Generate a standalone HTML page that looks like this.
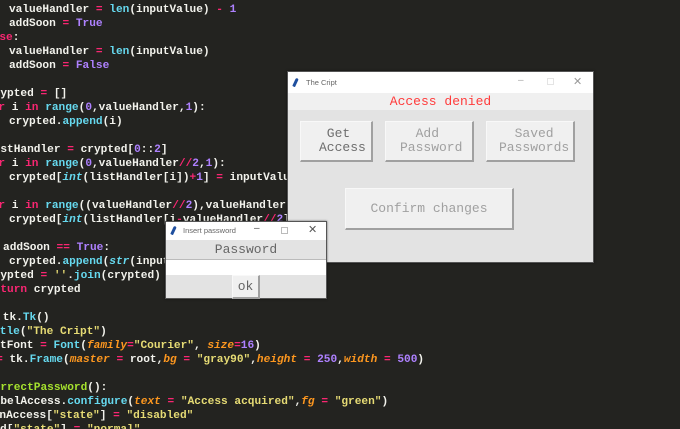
<!DOCTYPE html>
<html><head><meta charset="utf-8"><style>
*{margin:0;padding:0;box-sizing:border-box}
html,body{width:680px;height:429px;overflow:hidden}
body{background:#232320;position:relative;font-family:"Liberation Mono",monospace}
#c{position:absolute;left:0;top:0;width:680px;height:429px;overflow:hidden}
.l{position:absolute;white-space:pre;font-size:11.15px;font-weight:bold;color:#f2f2ec;line-height:14px;height:14px}
.k{color:#f92672}.f{color:#66d9ef}.n{color:#ae81ff}.s{color:#e6db74}.p{color:#fd971f;font-style:italic}.g{color:#a6e22e}.fi{color:#66d9ef;font-style:italic}
.win{position:absolute;background:#e3e3e3;border:1px solid #555;box-shadow:0 0 2px rgba(0,0,0,.6)}
.tb{position:absolute;left:0;right:0;top:0;background:#fff;font-family:"Liberation Sans",sans-serif;font-size:7.5px;color:#666}
.ic{position:absolute;width:3px;height:9px;background:#1f4f9f;border-radius:2px 2px 1px 1px;transform:rotate(25deg)}
.btn{position:absolute;background:#f0f0f0;border-right:2px solid #a0a0a0;border-bottom:2px solid #a0a0a0;border-top:1px solid #f8f8f8;border-left:1px solid #f8f8f8;font-family:"Liberation Mono",monospace;font-size:13px;color:#a0a0a0;line-height:14px;white-space:pre;display:flex;align-items:center}
</style></head><body><div id="c">
<div class="l" style="top:3px;left:9px">valueHandler <span class="k">=</span> <span class="f">len</span>(inputValue) <span class="k">-</span> <span class="n">1</span></div>
<div class="l" style="top:17px;left:9px">addSoon <span class="k">=</span> <span class="n">True</span></div>
<div class="l" style="top:31px;left:-14px"><span class="k">else</span>:</div>
<div class="l" style="top:45px;left:9px">valueHandler <span class="k">=</span> <span class="f">len</span>(inputValue)</div>
<div class="l" style="top:59px;left:9px">addSoon <span class="k">=</span> <span class="n">False</span></div>
<div class="l" style="top:87px;left:-13px">crypted <span class="k">=</span> []</div>
<div class="l" style="top:101px;left:-15px"><span class="k">for</span> i <span class="k">in</span> <span class="f">range</span>(<span class="n">0</span>,valueHandler,<span class="n">1</span>):</div>
<div class="l" style="top:115px;left:9px">crypted.<span class="f">append</span>(i)</div>
<div class="l" style="top:143px;left:-13px">listHandler <span class="k">=</span> crypted[<span class="n">0</span>::<span class="n">2</span>]</div>
<div class="l" style="top:157px;left:-15px"><span class="k">for</span> i <span class="k">in</span> <span class="f">range</span>(<span class="n">0</span>,valueHandler<span class="k">//</span><span class="n">2</span>,<span class="n">1</span>):</div>
<div class="l" style="top:171px;left:9px">crypted[<span class="fi">int</span>(listHandler[i])<span class="k">+</span><span class="n">1</span>] <span class="k">=</span> inputValue[i]</div>
<div class="l" style="top:199px;left:-15px"><span class="k">for</span> i <span class="k">in</span> <span class="f">range</span>((valueHandler<span class="k">//</span><span class="n">2</span>),valueHandler,<span class="n">1</span>):</div>
<div class="l" style="top:213px;left:9px">crypted[<span class="fi">int</span>(listHandler[i<span class="k">-</span>valueHandler<span class="k">//</span><span class="n">2</span>])]</div>
<div class="l" style="top:241px;left:-17px"><span class="k">if</span> addSoon <span class="k">==</span> <span class="n">True</span>:</div>
<div class="l" style="top:255px;left:9px">crypted.<span class="f">append</span>(<span class="fi">str</span>(inputValue[valueHandler]))</div>
<div class="l" style="top:269px;left:-13px">crypted <span class="k">=</span> <span class="s">''</span>.<span class="f">join</span>(crypted)</div>
<div class="l" style="top:283px;left:-13px"><span class="k">return</span> crypted</div>
<div class="l" style="top:311px;left:-44px">root <span class="k">=</span> tk.<span class="f">Tk</span>()</div>
<div class="l" style="top:325px;left:-47px">root.<span class="f">title</span>(<span class="s">"The Cript"</span>)</div>
<div class="l" style="top:339px;left:-20px">textFont <span class="k">=</span> <span class="f">Font</span>(<span class="p">family</span><span class="k">=</span><span class="s">"Courier"</span>, <span class="p">size</span><span class="k">=</span><span class="n">16</span>)</div>
<div class="l" style="top:353px;left:-44px">frame <span class="k">=</span> tk.<span class="f">Frame</span>(<span class="p">master</span> <span class="k">=</span> root,<span class="p">bg</span> <span class="k">=</span> <span class="s">"gray90"</span>,<span class="p">height</span> <span class="k">=</span> <span class="n">250</span>,<span class="p">width</span> <span class="k">=</span> <span class="n">500</span>)</div>
<div class="l" style="top:381px;left:-13px"><span class="g">correctPassword</span>():</div>
<div class="l" style="top:395px;left:-13px">labelAccess.<span class="f">configure</span>(<span class="p">text</span> <span class="k">=</span> <span class="s">"Access acquired"</span>,<span class="p">fg</span> <span class="k">=</span> <span class="s">"green"</span>)</div>
<div class="l" style="top:409px;left:-34px">buttonAccess[<span class="s">"state"</span>] <span class="k">=</span> <span class="s">"disabled"</span></div>
<div class="l" style="top:423px;left:-20px">tAdd[<span class="s">"state"</span>] <span class="k">=</span> <span class="s">"normal"</span></div>

<div class="win" style="left:287px;top:71px;width:307px;height:192px">
 <div class="tb" style="height:21px"><span class="ic" style="left:6px;top:6px"></span><span style="position:absolute;left:18px;top:6px">The Cript</span>
 <span style="position:absolute;left:230px;top:3px;font-size:10px;color:#aaa">&#8211;</span><span style="position:absolute;left:259px;top:6px;width:7px;height:7px;border:1px solid #e4e4e4"></span><span style="position:absolute;left:285px;top:3px;font-size:11px;color:#999">&#x2715;</span></div>
 <div style="position:absolute;left:0;right:0;top:21px;height:17px;background:#f0f0f0;text-align:center;color:#ff3b3b;font-size:13px;line-height:17px">Access denied</div>
 <div class="btn" style="left:12px;top:49px;width:73px;height:41px;color:#6e6e6e;padding-left:18px"> Get
Access</div>
 <div class="btn" style="left:97px;top:49px;width:89px;height:41px;padding-left:14px">  Add
Password</div>
 <div class="btn" style="left:198px;top:49px;width:89px;height:41px;padding-left:12px">  Saved
Passwords</div>
 <div class="btn" style="left:57px;top:116px;width:169px;height:42px;justify-content:center">Confirm changes</div>
</div>

<div class="win" style="left:165px;top:221px;width:162px;height:78px">
 <div class="tb" style="height:18px"><span class="ic" style="left:6px;top:4px"></span><span style="position:absolute;left:17px;top:4px">Insert password</span>
 <span style="position:absolute;left:88px;top:1px;font-size:10px;color:#555">&#8211;</span><span style="position:absolute;left:115px;top:5px;width:7px;height:7px;border:1px solid #bbb"></span><span style="position:absolute;left:142px;top:1px;font-size:11px;color:#555">&#x2715;</span></div>
 <div style="position:absolute;left:0;right:0;top:18px;height:19px;background:#e3e3e3;text-align:center;color:#666;font-size:13px;line-height:19px">Password</div>
 <div style="position:absolute;left:0;right:0;top:37px;height:16px;background:#fff;border-top:1px solid #bbb"></div>
 <div class="btn" style="left:66px;top:53px;width:28px;height:24px;color:#666;justify-content:center">ok</div>
</div>
</div></body></html>
